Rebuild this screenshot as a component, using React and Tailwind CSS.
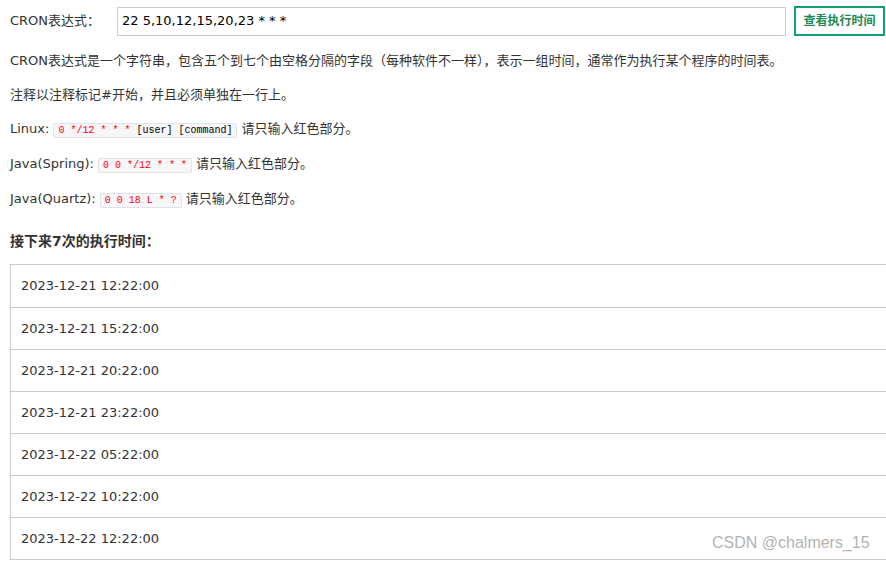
import React from 'react';

const times = [
  '2023-12-21 12:22:00',
  '2023-12-21 15:22:00',
  '2023-12-21 20:22:00',
  '2023-12-21 23:22:00',
  '2023-12-22 05:22:00',
  '2023-12-22 10:22:00',
  '2023-12-22 12:22:00',
];

const Code = ({ children }) => (
  <code className="mx-[4px] px-[4px] py-[1px] bg-[#f7f7f9] border border-[#e1e1e8] rounded-[2px] text-[10px] text-[#ff0000] font-['Liberation_Mono',monospace] leading-[16px]">
    {children}
  </code>
);

export default function App() {
  return (
    <div className="relative w-[886px] h-[561px] overflow-hidden bg-white text-[13px] text-[#333] font-['DejaVu_Sans','Noto_Sans_CJK_SC',sans-serif]">
      {/* Input row */}
      <div className="flex items-center pt-[6px] pl-[10px]">
        <span className="w-[107px]">CRON表达式：</span>
        <div className="w-[669px] h-[29px] border border-[#ccc] flex items-center px-[4px] text-black">
          22 5,10,12,15,20,23 * * *
        </div>
        <button className="ml-[8px] w-[91px] h-[30px] border-2 border-[#13a06a] text-[#1a8a55] font-bold text-[12px]">
          查看执行时间
        </button>
      </div>

      <div className="pl-[10px] mt-[16px] space-y-[16px] leading-[18px]">
        <p>CRON表达式是一个字符串，包含五个到七个由空格分隔的字段（每种软件不一样），表示一组时间，通常作为执行某个程序的时间表。</p>
        <p>注释以注释标记#开始，并且必须单独在一行上。</p>
        <p>Linux:<Code>0 */12 * * * <span className="text-black">[user] [command]</span></Code>请只输入红色部分。</p>
        <p>Java(Spring):<Code>0 0 */12 * * *</Code>请只输入红色部分。</p>
        <p>Java(Quartz):<Code>0 0 18 L * ?</Code>请只输入红色部分。</p>
      </div>

      <h3 className="pl-[10px] mt-[23px] font-bold text-[14px] leading-[18px]">接下来7次的执行时间：</h3>

      <div className="ml-[10px] mt-[14px] w-[890px] border border-[#ccc]">
        {times.map((t, i) => (
          <div key={i} className={`h-[42px] flex items-center pl-[10px] ${i > 0 ? 'border-t border-[#ccc]' : 'h-[41px]'}`}>
            {t}
          </div>
        ))}
      </div>

      <div className="absolute left-[712px] top-[531px] text-[16px] text-[#b3b3b3] font-['Liberation_Sans',sans-serif]">
        CSDN @chalmers_15
      </div>
    </div>
  );
}
